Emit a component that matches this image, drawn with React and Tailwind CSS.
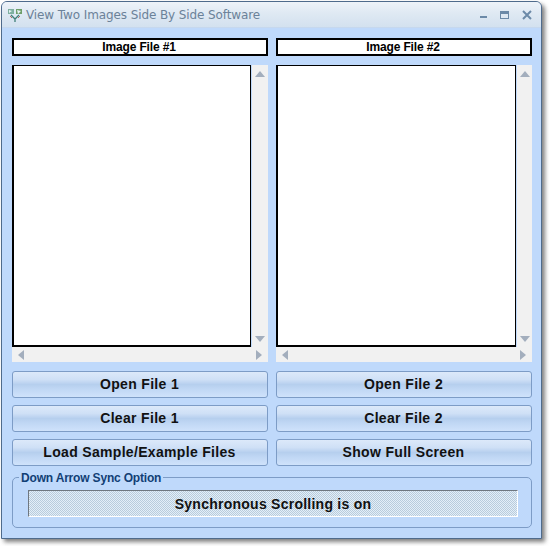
const font = "font-['Liberation_Sans',Arial,sans-serif]";

function TitleIcon() {
  return (
    <svg width="16" height="16" viewBox="0 0 16 16" className="shrink-0">
      <rect x="1" y="2" width="6" height="5" fill="#7fb0a0" />
      <rect x="9" y="2" width="6" height="5" fill="#6f9f6a" />
      <path d="M2 3l3 1-3 2zM10 3l4 1-3 3z" fill="#e8f2f6" />
      <path d="M4 8l4 4 4-4M8 12v3" fill="none" stroke="#3f7f78" strokeWidth="1.3" />
      <path d="M3 9l2 2M13 9l-2 2" stroke="#b36a6a" strokeWidth="1" />
    </svg>
  );
}

function Scrollbar() {
  return (
    <div className="flex-1 bg-[#f1f1f1] flex flex-col items-center justify-between pt-[6px] pb-[5px] ml-px">
      <div className="w-0 h-0 border-x-[5px] border-x-transparent border-b-[6px] border-b-[#a3aebd]" />
      <div className="w-0 h-0 border-x-[5px] border-x-transparent border-t-[6px] border-t-[#a3aebd]" />
    </div>
  );
}

function Column({ title, listWidth }) {
  return (
    <div className="flex flex-col w-[256px]">
      <div className="h-[18px] border-2 border-black bg-white flex items-center justify-center pr-[2px] text-[12px] font-bold text-black leading-none tracking-[-0.15px]">
        {title}
      </div>
      <div className="mt-[9px] flex h-[282px]">
        <div className={`${listWidth} shrink-0 h-full bg-white border-2 border-black border-r-[1px] border-t-[1px]`} />
        <Scrollbar />
      </div>
      <div className="h-[15px] bg-[#f1f1f1] flex items-center justify-between pl-[6px] pr-[6px]">
        <div className="w-0 h-0 border-y-[5px] border-y-transparent border-r-[6px] border-r-[#a3aebd]" />
        <div className="w-0 h-0 border-y-[5px] border-y-transparent border-l-[6px] border-l-[#a3aebd]" />
      </div>
    </div>
  );
}

function Btn({ children }) {
  return (
    <div className="w-[256px] h-[27px] rounded-[3px] border border-[#7d9cc6] bg-[linear-gradient(180deg,#dce9fa_0%,#cfe0f6_30%,#b6cfee_50%,#c0d7f4_68%,#cfe2fb_100%)] flex items-center justify-center pb-[2px] pr-px text-[14px] font-bold tracking-[0.32px] text-[#111] leading-none">
      {children}
    </div>
  );
}

export default function App() {
  return (
    <div className={`w-[550px] h-[546px] bg-white ${font} overflow-hidden relative`}>
      <div className="w-[541px] h-[538px] ml-px mt-px rounded-t-[6px] border border-[#4f6b8c] bg-[#bfd9fb] flex flex-col shadow-[3px_3px_4px_rgba(60,60,60,0.65)]">
        <div className="h-[26px] shrink-0 rounded-t-[5px] bg-[linear-gradient(180deg,#eef3f9_0%,#dfe9f3_45%,#d3e1ef_100%)] border-b border-[#c6d8ee] flex items-center pl-[5px] pr-[9px]">
          <TitleIcon />
          <span className="ml-[3px] text-[#6b8299] font-['DejaVu_Sans',sans-serif] text-[12px] tracking-[-0.1px]">
            View Two Images Side By Side Software
          </span>
          <div className="ml-auto flex items-center gap-[13px]">
            <div className="w-[7px] h-[2px] bg-[#6c8aa8] mt-[4px]" />
            <div className="w-[9px] h-[8px] border border-[#6c8aa8] border-t-[3px] bg-[#dfe9f3]" />
            <svg width="10" height="10" viewBox="0 0 10 10">
              <path d="M1 1l8 8M9 1l-8 8" stroke="#6c8aa8" strokeWidth="2" />
            </svg>
          </div>
        </div>
        <div className="flex-1 pl-[10px] pt-[10px] flex flex-col">
          <div className="flex gap-[8px]">
            <Column title="Image File #1" listWidth="w-[239px]" />
            <Column title="Image File #2" listWidth="w-[240px]" />
          </div>
          <div className="mt-[9px] grid grid-cols-[256px_256px] gap-x-[8px] gap-y-[7px]">
            <Btn>Open File 1</Btn>
            <Btn>Open File 2</Btn>
            <Btn>Clear File 1</Btn>
            <Btn>Clear File 2</Btn>
            <Btn>Load Sample/Example Files</Btn>
            <Btn>Show Full Screen</Btn>
          </div>
          <div className="relative mt-[11px] w-[520px] h-[51px] rounded-[5px] border border-[#7d9cc6] pt-[12px] pl-[15px]">
            <span className="absolute left-[6px] -top-[7px] bg-[#bfd9fb] px-[2px] text-[12px] font-bold text-[#123f75] leading-[15px] tracking-[-0.18px]">
              Down Arrow Sync Option
            </span>
            <div className="w-[490px] h-[27px] border border-[#fff] border-t-[#6f7780] border-l-[#6f7780] bg-[repeating-conic-gradient(#e4eef8_0_25%,#b8ccdc_0_50%)] bg-[length:2px_2px] flex items-center justify-center text-[14px] font-bold tracking-[0.25px] text-[#111] leading-none">
              Synchronous Scrolling is on
            </div>
          </div>
        </div>
      </div>
    </div>
  );
}
